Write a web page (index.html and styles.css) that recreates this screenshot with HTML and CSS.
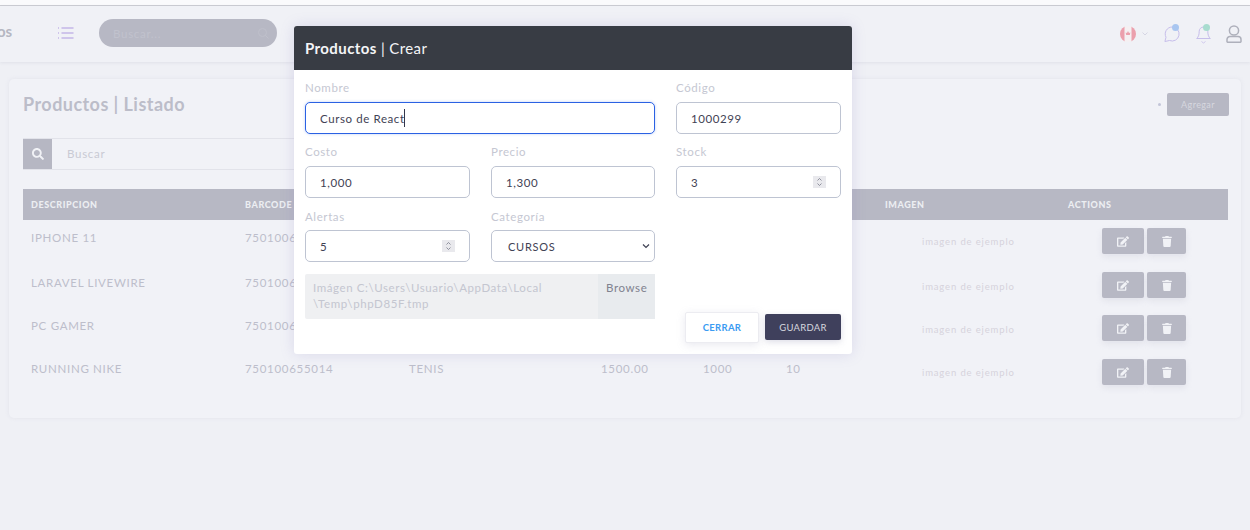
FILE: index.html
```html
<!DOCTYPE html>
<html lang="es">
<head>
<meta charset="utf-8">
<title>Productos</title>
<link rel="stylesheet" href="styles.css">
</head>
<body>
<div class="browser-strip"></div>
<header class="topbar">
  <span class="logo">os</span>
  <svg class="menu-icon" viewBox="0 0 16 12" width="16" height="12"><g stroke="#c3b6e8" stroke-width="1.3" fill="none"><path d="M3.5 1h12M3.5 6h12M3.5 11h12"/><path d="M0 1h1M0 6h1M0 11h1"/></g></svg>
  <div class="pill-search">
    <span>Buscar...</span>
    <svg viewBox="0 0 12 12" width="12" height="12"><circle cx="5.5" cy="5.500" r="4" fill="none" stroke="#bfc0cb" stroke-width="1"/><path d="M8.5 8.5l3 3" stroke="#bfc0cb"/></svg>
  </div>
  <div class="top-icons">
    <svg class="flag" viewBox="0 0 16 16" width="16" height="16"><defs><clipPath id="fc"><circle cx="8" cy="8" r="8"/></clipPath></defs><g clip-path="url(#fc)"><rect width="16" height="16" fill="#f5f0f2"/><rect width="4.5" height="16" fill="#eba0ad"/><rect x="11.5" width="4.5" height="16" fill="#eba0ad"/><path d="M8 5l1 2 1.400-.4L9.800 9H6.200L5.600 6.600 7 7z" fill="#eba0ad"/></g></svg>
    <svg class="chev" viewBox="0 0 6 4" width="6" height="4"><path d="M.5.500L3 3 5.500.5" fill="none" stroke="#cfcfe0" stroke-width=".8"/></svg>
    <span class="icon-wrap chat">
      <svg viewBox="0 0 17 17" width="17" height="17"><path d="M8 2a7 7 0 1 1-2.500 13.500L.9 16.500l1.100-4.300A7 7 0 0 1 8 2z" fill="none" stroke="#c6bdea" stroke-width="1"/></svg>
      <i class="dot blue"></i>
    </span>
    <span class="icon-wrap bell">
      <svg viewBox="0 0 16 19" width="16" height="19"><path d="M7.500 2a4.300 4.300 0 0 1 4.300 4.300c0 3.700.9 5.700 2.500 7.200H.7c1.600-1.500 2.500-3.500 2.500-7.200A4.300 4.300 0 0 1 7.500 2z" fill="none" stroke="#c6bdea" stroke-width="1"/><path d="M5.500 16.500l2 1.500 2-1.500" fill="none" stroke="#c6bdea" stroke-width=".8"/></svg>
      <i class="dot teal"></i>
    </span>
    <svg class="user" viewBox="0 0 16 18" width="16" height="18"><circle cx="8" cy="5.500" r="4.600" fill="none" stroke="#aeb0bb" stroke-width="1.500"/><path d="M1 16.500v-2a3 3 0 0 1 3-3h8a3 3 0 0 1 3 3v2a.8.8 0 0 1-.8.8H1.800a.8.8 0 0 1-.8-.8z" fill="none" stroke="#aeb0bb" stroke-width="1.500"/></svg>
  </div>
</header>

<main class="card">
  <div class="card-head">
    <h2>Productos | Listado</h2>
    <div class="add-wrap"><i class="add-dot"></i><button class="add-btn" type="button">Agregar</button></div>
  </div>
  <div class="list-search">
    <span class="list-search-icon"><svg viewBox="0 0 512 512" width="12" height="12"><path fill="#f1f2f6" d="M505 442.700L405.300 343c-4.500-4.500-10.600-7-17-7H372c27.600-35.300 44-79.700 44-128C416 93.100 322.900 0 208 0S0 93.100 0 208s93.100 208 208 208c48.300 0 92.700-16.400 128-44v16.300c0 6.400 2.500 12.500 7 17l99.700 99.700c9.400 9.400 24.600 9.400 33.900 0l28.300-28.300c9.400-9.400 9.400-24.600.1-34zM208 336c-70.700 0-128-57.200-128-128 0-70.700 57.200-128 128-128 70.700 0 128 57.200 128 128 0 70.700-57.200 128-128 128z"/></svg></span>
    <span class="list-search-text">Buscar</span>
  </div>
  <div class="table">
    <div class="row head">
      <span>DESCRIPCION</span><span>BARCODE</span><span></span><span></span><span></span><span></span><span>IMAGEN</span><span>ACTIONS</span>
    </div>
    <div class="row r1">
      <span class="up">IPHONE 11</span><span class="up">750100655011</span><span></span><span></span><span></span><span></span><span class="img-txt">imagen de ejemplo</span>
      <span class="acts"><button type="button"><svg viewBox="0 0 576 512" width="12" height="11"><path fill="#f1f2f6" d="M402.600 83.200l90.200 90.200c3.800 3.800 3.800 10 0 13.800L274.400 405.600l-92.800 10.300c-12.400 1.400-22.900-9.100-21.500-21.500l10.300-92.800L388.800 83.200c3.800-3.800 10-3.800 13.800 0zm162-22.900l-48.800-48.800c-15.200-15.200-39.900-15.200-55.200 0l-35.400 35.400c-3.800 3.800-3.800 10 0 13.800l90.200 90.200c3.800 3.800 10 3.800 13.800 0l35.400-35.400c15.200-15.300 15.200-40 0-55.200zM384 346.200V448H64V128h229.800c3.200 0 6.200-1.300 8.500-3.500l40-40c7.600-7.600 2.200-20.500-8.500-20.500H48C21.500 64 0 85.500 0 112v352c0 26.500 21.500 48 48 48h352c26.500 0 48-21.500 48-48V306.200c0-10.700-12.900-16-20.500-8.500l-40 40c-2.200 2.300-3.500 5.300-3.500 8.500z"/></svg></button><button type="button" class="del"><svg viewBox="0 0 448 512" width="10" height="11"><path fill="#f1f2f6" d="M432 32H312l-9.400-18.700A24 24 0 0 0 281.100 0H166.800a23.700 23.700 0 0 0-21.400 13.300L136 32H16A16 16 0 0 0 0 48v32a16 16 0 0 0 16 16h416a16 16 0 0 0 16-16V48a16 16 0 0 0-16-16zM53.200 467a48 48 0 0 0 47.900 45h245.800a48 48 0 0 0 47.900-45L416 128H32z"/></svg></button></span>
    </div>
    <div class="row r2">
      <span class="up">LARAVEL LIVEWIRE</span><span class="up">750100655012</span><span></span><span></span><span></span><span></span><span class="img-txt">imagen de ejemplo</span>
      <span class="acts"><button type="button"><svg viewBox="0 0 576 512" width="12" height="11"><path fill="#f1f2f6" d="M402.600 83.200l90.200 90.200c3.800 3.800 3.800 10 0 13.800L274.400 405.600l-92.800 10.300c-12.400 1.400-22.900-9.100-21.500-21.500l10.300-92.800L388.800 83.200c3.800-3.800 10-3.800 13.800 0zm162-22.900l-48.800-48.800c-15.200-15.200-39.900-15.200-55.200 0l-35.400 35.400c-3.800 3.800-3.800 10 0 13.800l90.200 90.200c3.800 3.800 10 3.800 13.800 0l35.400-35.400c15.200-15.300 15.200-40 0-55.200zM384 346.200V448H64V128h229.800c3.200 0 6.200-1.300 8.500-3.500l40-40c7.600-7.600 2.200-20.500-8.500-20.500H48C21.500 64 0 85.500 0 112v352c0 26.500 21.500 48 48 48h352c26.500 0 48-21.500 48-48V306.200c0-10.700-12.900-16-20.500-8.500l-40 40c-2.200 2.300-3.500 5.300-3.500 8.500z"/></svg></button><button type="button" class="del"><svg viewBox="0 0 448 512" width="10" height="11"><path fill="#f1f2f6" d="M432 32H312l-9.400-18.700A24 24 0 0 0 281.100 0H166.800a23.700 23.700 0 0 0-21.400 13.300L136 32H16A16 16 0 0 0 0 48v32a16 16 0 0 0 16 16h416a16 16 0 0 0 16-16V48a16 16 0 0 0-16-16zM53.200 467a48 48 0 0 0 47.900 45h245.800a48 48 0 0 0 47.900-45L416 128H32z"/></svg></button></span>
    </div>
    <div class="row r3">
      <span class="up">PC GAMER</span><span class="up">750100655013</span><span></span><span></span><span></span><span></span><span class="img-txt">imagen de ejemplo</span>
      <span class="acts"><button type="button"><svg viewBox="0 0 576 512" width="12" height="11"><path fill="#f1f2f6" d="M402.600 83.200l90.200 90.200c3.800 3.800 3.800 10 0 13.800L274.400 405.600l-92.800 10.300c-12.400 1.400-22.900-9.100-21.500-21.500l10.300-92.800L388.800 83.200c3.800-3.800 10-3.800 13.800 0zm162-22.900l-48.800-48.800c-15.200-15.200-39.900-15.200-55.200 0l-35.400 35.400c-3.800 3.800-3.800 10 0 13.800l90.200 90.200c3.800 3.800 10 3.800 13.800 0l35.400-35.400c15.200-15.300 15.200-40 0-55.200zM384 346.200V448H64V128h229.800c3.200 0 6.200-1.300 8.500-3.500l40-40c7.600-7.600 2.200-20.500-8.500-20.500H48C21.500 64 0 85.500 0 112v352c0 26.500 21.500 48 48 48h352c26.500 0 48-21.500 48-48V306.200c0-10.700-12.900-16-20.500-8.500l-40 40c-2.200 2.300-3.500 5.300-3.500 8.500z"/></svg></button><button type="button" class="del"><svg viewBox="0 0 448 512" width="10" height="11"><path fill="#f1f2f6" d="M432 32H312l-9.400-18.700A24 24 0 0 0 281.100 0H166.800a23.700 23.700 0 0 0-21.400 13.300L136 32H16A16 16 0 0 0 0 48v32a16 16 0 0 0 16 16h416a16 16 0 0 0 16-16V48a16 16 0 0 0-16-16zM53.200 467a48 48 0 0 0 47.900 45h245.800a48 48 0 0 0 47.900-45L416 128H32z"/></svg></button></span>
    </div>
    <div class="row r4">
      <span class="up">RUNNING NIKE</span><span class="up">750100655014</span><span class="up">TENIS</span><span class="up">1500.00</span><span class="up">1000</span><span class="up">10</span><span class="img-txt">imagen de ejemplo</span>
      <span class="acts"><button type="button"><svg viewBox="0 0 576 512" width="12" height="11"><path fill="#f1f2f6" d="M402.600 83.200l90.200 90.200c3.800 3.800 3.800 10 0 13.800L274.400 405.600l-92.800 10.300c-12.400 1.400-22.900-9.100-21.500-21.500l10.300-92.800L388.800 83.200c3.800-3.800 10-3.800 13.800 0zm162-22.900l-48.800-48.800c-15.200-15.200-39.900-15.200-55.200 0l-35.400 35.400c-3.800 3.800-3.800 10 0 13.800l90.200 90.200c3.800 3.800 10 3.800 13.800 0l35.400-35.400c15.200-15.300 15.200-40 0-55.200zM384 346.200V448H64V128h229.800c3.200 0 6.200-1.300 8.500-3.500l40-40c7.600-7.600 2.200-20.500-8.500-20.500H48C21.500 64 0 85.500 0 112v352c0 26.500 21.500 48 48 48h352c26.500 0 48-21.500 48-48V306.200c0-10.700-12.900-16-20.500-8.500l-40 40c-2.200 2.300-3.500 5.300-3.500 8.500z"/></svg></button><button type="button" class="del"><svg viewBox="0 0 448 512" width="10" height="11"><path fill="#f1f2f6" d="M432 32H312l-9.400-18.700A24 24 0 0 0 281.100 0H166.800a23.700 23.700 0 0 0-21.400 13.300L136 32H16A16 16 0 0 0 0 48v32a16 16 0 0 0 16 16h416a16 16 0 0 0 16-16V48a16 16 0 0 0-16-16zM53.200 467a48 48 0 0 0 47.900 45h245.800a48 48 0 0 0 47.900-45L416 128H32z"/></svg></button></span>
    </div>
  </div>
</main>

<section class="modal">
  <div class="modal-head"><b>Productos</b> | Crear</div>
  <form class="modal-form">
    <div class="field wide">
      <label>Nombre</label>
      <div class="focus-wrap"><input class="ctl focused" type="text" value="Curso de React"><i class="caret"></i></div>
    </div>
    <div class="field"><label>Código</label><input class="ctl" type="text" value="1000299"></div>
    <div class="field"><label>Costo</label><input class="ctl" type="text" value="1,000"></div>
    <div class="field"><label>Precio</label><input class="ctl" type="text" value="1,300"></div>
    <div class="field"><label>Stock</label><input class="ctl" type="number" value="3"></div>
    <div class="field low"><label>Alertas</label><input class="ctl" type="number" value="5"></div>
    <div class="field low"><label>Categoría</label><select class="ctl sel"><option>CURSOS</option></select></div>
    <div class="field"></div>
    <div class="file wide">
      <span class="file-name">Imágen C:\Users\Usuario\AppData\Local<br>\Temp\phpD85F.tmp</span>
      <span class="file-btn">Browse</span>
    </div>
    <div class="modal-actions">
      <button class="btn-close" type="button">CERRAR</button>
      <button class="btn-save" type="button">GUARDAR</button>
    </div>
  </form>
</section>
</body>
</html>
```
FILE: styles.css
```css
* { box-sizing: border-box; }
html, body { height: 100%; }
body {
  margin: 0;
  background: #eff0f5;
  font-family: "Lato", "Open Sans", sans-serif;
  color: #b9bac6;
  overflow: hidden;
}
button { font-family: inherit; cursor: pointer; }

.browser-strip { height: 6px; background: #fafafc; border-bottom: 1px solid #cbccd2; }

.topbar {
  height: 56px;
  background: #f0f1f6;
  box-shadow: 0 1px 3px rgba(170,172,190,.22);
  display: flex;
  align-items: center;
  padding-right: 8px;
  overflow: hidden;
}
.logo { margin-left: -3px; font-size: 15px; font-weight: 700; color: #b5b7c2; width: 61px; margin-top: -6px; }
.menu-icon { margin-top: -2px; }
.pill-search {
  margin-left: 25px;
  width: 178px;
  height: 28px;
  margin-top: -2px;
  border-radius: 14px;
  background: #b7b8c4;
  display: flex;
  align-items: center;
  justify-content: space-between;
  padding: 0 8px 0 14px;
  font-size: 11.5px;
  letter-spacing: .7px;
  color: #c1c2cd;
}
.top-icons { margin-left: auto; display: flex; align-items: center; }
.flag { margin-right: 6px; }
.chev { margin-right: 16px; }
.icon-wrap { position: relative; display: block; height: 19px; }
.chat { width: 17px; margin-right: 15px; }
.bell { width: 16px; margin-right: 14px; }
.dot { position: absolute; width: 7px; height: 7px; border-radius: 50%; top: -1px; right: 2px; }
.dot.blue { background: #a9c6f0; }
.dot.teal { background: #a8dccf; }

.card {
  margin: 17px 9px 0;
  height: 339px;
  background: #f1f2f7;
  border-radius: 5px;
  box-shadow: 0 0 4px rgba(180,182,200,.2);
  padding: 14px 13px 0 14px;
}
.card-head { display: flex; justify-content: space-between; align-items: flex-start; }
.card-head h2 { margin: 0; font-size: 18px; line-height: 23px; font-weight: 700; color: #bcbdc9; letter-spacing: .45px; }
.add-wrap { display: flex; align-items: center; gap: 6px; margin-right: -1px; }
.add-dot { width: 3px; height: 3px; border-radius: 50%; background: #c3c5d8; }
.add-btn {
  width: 62px; height: 23px;
  border: 0; border-radius: 2px;
  background: #b7b8c4;
  color: #d6d7df;
  font-size: 9px;
  letter-spacing: .4px;
  padding: 0;
}

.list-search {
  margin-top: 22px;
  width: 500px;
  height: 32px;
  display: flex;
  align-items: stretch;
  border: 1px solid #e2e3ea;
  border-left: 0;
}
.list-search-icon { width: 29px; background: #b6b7c3; display: flex; align-items: center; justify-content: center; }
.list-search-text { padding-left: 15px; line-height: 30px; font-size: 11.5px; letter-spacing: .7px; color: #c9cad4; }

.table { margin-top: 19px; }
.row {
  display: grid;
  grid-template-columns: 214px 164px 192px 102px 83px 99px 183px 1fr;
  padding-left: 8px;
  align-items: start;
}
.row.head { height: 31px; background: #b7b8c4; color: #eceef2; font-size: 9px; font-weight: 900; letter-spacing: .6px; align-items: center; }
.row.r1 { height: 41px; padding-top: 10px; }
.row.r2 { height: 44px; padding-top: 14px; }
.row.r3 { height: 43px; padding-top: 13px; }
.row.r4 { height: 44px; padding-top: 13px; }
.up { font-size: 11.5px; letter-spacing: .7px; color: #bdbecb; line-height: 15px; white-space: nowrap; }
.img-txt { font-size: 9.5px; letter-spacing: .85px; color: #d6d3dc; padding-left: 37px; line-height: 15px; margin-top: 4px; white-space: nowrap; }
.acts { display: flex; gap: 3px; padding-left: 34px; margin-top: -3px; }
.row.r1 .acts, .row.r4 .acts { margin-top: -2px; }
.acts button {
  width: 42px; height: 26px;
  border: 0; border-radius: 2px;
  background: #b7b8c4;
  box-shadow: 0 3px 6px rgba(170,172,190,.2);
  padding: 0;
  display: flex; align-items: center; justify-content: center;
}
.acts button.del { width: 39px; }

.modal {
  position: absolute;
  left: 294px; top: 26px;
  width: 558px; height: 328px;
  background: #fff;
  border-radius: 3px;
  box-shadow: 0 0 14px rgba(130,125,190,.22);
  overflow: hidden;
}
.modal-head {
  height: 44px;
  background: #383c44;
  color: #f4f5f7;
  padding-left: 11px;
  font-size: 15px;
  line-height: 44px;
  letter-spacing: .4px;
}
.modal-head b { font-weight: 700; }

.modal-form {
  display: grid;
  grid-template-columns: 165px 164px 165px;
  column-gap: 21px;
  row-gap: 9px;
  padding: 9px 0 0 11px;
}
.field { display: flex; flex-direction: column; }
.field.wide { grid-column: span 2; }
.field label { height: 18px; line-height: 18px; margin-bottom: 5px; font-size: 11.5px; letter-spacing: .6px; color: #c5c7d2; }
.field.low label { line-height: 20px; }
.focus-wrap { position: relative; }
.ctl {
  width: 100%;
  height: 32px;
  border: 1px solid #bec4d2;
  border-radius: 5px;
  padding: 0 14px;
  background: #fff;
  font-family: inherit;
  font-size: 11.5px;
  letter-spacing: .6px;
  color: #3f4254;
  outline: 0;
}
.ctl.focused { border-color: #2b62e3; box-shadow: 0 0 3px rgba(43,98,227,.3); }
.caret { position: absolute; left: 99px; top: 7px; width: 1px; height: 18px; background: #33364a; }
input[type=number]::-webkit-inner-spin-button {
  -webkit-appearance: none;
  opacity: 1;
  width: 13px;
  height: 12px;
  background: #e9e9ed url("data:image/svg+xml,%3Csvg xmlns='http://www.w3.org/2000/svg' width='13' height='12'%3E%3Cpath d='M4.500 4.500L6.500 2.500 8.500 4.500M4.500 7.500L6.500 9.500 8.500 7.500' fill='none' stroke='%23777a88' stroke-width='.8'/%3E%3C/svg%3E") no-repeat center;
}
.sel {
  -webkit-appearance: none;
  appearance: none;
  padding-left: 16px;
  font-size: 11px;
  letter-spacing: .75px;
  background: #fff url("data:image/svg+xml,%3Csvg xmlns='http://www.w3.org/2000/svg' width='8' height='6'%3E%3Cpath d='M1 1.500L4 4.500 7 1.500' fill='none' stroke='%233f4254' stroke-width='1.200'/%3E%3C/svg%3E") no-repeat right 4px center;
}

.file {
  grid-column: span 2;
  align-self: start;
  margin-top: 3px;
  height: 45px;
  border-radius: 2px;
  background: #eff0f2;
  display: flex;
  font-size: 11.5px;
  letter-spacing: .6px;
  line-height: 16px;
}
.file-name { flex: 1; padding: 6px 0 0 8px; color: #c4c6d0; white-space: nowrap; }
.file-btn { width: 57px; background: #e8ebee; color: #80828f; padding: 6px 0 0 8px; }

.modal-actions { height: 72px; display: flex; align-items: flex-end; justify-content: flex-end; gap: 6px; }
.btn-close {
  width: 74px; height: 31px;
  background: #fff; border: 1px solid #ececf1; border-radius: 2px;
  box-shadow: 0 2px 8px rgba(150,150,180,.22);
  color: #3b9bf2; font-size: 9.5px; font-weight: 700; letter-spacing: .3px; padding: 0;
}
.btn-save {
  width: 76px; height: 26px; margin-bottom: 3px;
  background: #3f405c; border: 0; border-radius: 2px;
  box-shadow: 0 2px 6px rgba(120,120,160,.25);
  color: #d6d7df; font-size: 9.5px; letter-spacing: .3px; padding: 0;
}
```
